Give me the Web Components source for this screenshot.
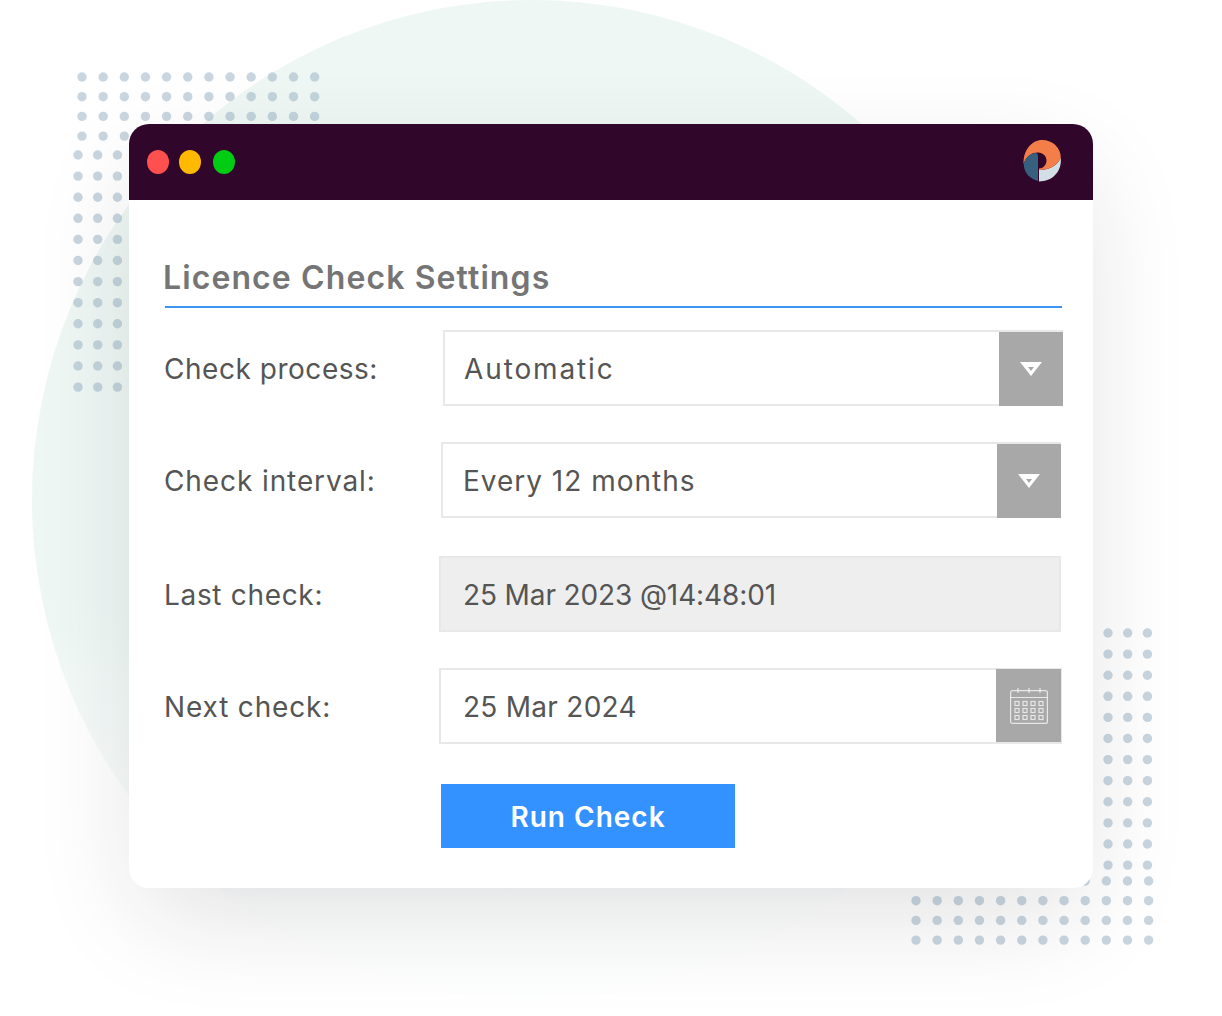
<!DOCTYPE html>
<html lang="en">
<head>
<meta charset="utf-8">
<title>Licence Check Settings</title>
<style>
  html, body { margin: 0; background: #fff; }
  body { width: 1222px; height: 1016px; overflow: hidden; font-family: Inter, "Liberation Sans", sans-serif; }
</style>
</head>
<body>
<licence-scene>
  <licence-window title-text="Licence Check Settings">
    <settings-row label="Check process:" track=".53" field-x="443" field-end="1063" gap="0"><select-field value="Automatic" track="1.88" pad="19"></select-field></settings-row>
    <settings-row label="Check interval:" track=".9" field-x="441" field-end="1061" gap="36"><select-field value="Every 12 months" track=".99" pad="20"></select-field></settings-row>
    <settings-row label="Last check:" track=".68" field-x="439" field-end="1061" gap="38"><read-field value="25 Mar 2023 @14:48:01" track="-.12"></read-field></settings-row>
    <settings-row label="Next check:" track=".84" field-x="439" field-end="1062" gap="36"><date-field value="25 Mar 2024" track=".27"></date-field></settings-row>
    <run-button>Run Check</run-button>
  </licence-window>
</licence-scene>

<script>
class DotGrid extends HTMLElement {
	connectedCallback() {
		const cols = +this.getAttribute("cols");
		const rows = +this.getAttribute("rows");
		const dx = +this.getAttribute("dx");
		const dy = +this.getAttribute("dy");
		const w = (cols - 1) * dx + 10;
		const h = (rows - 1) * dy + 10;
		let dots = "";
		for (let r = 0; r < rows; r++) {
			for (let c = 0; c < cols; c++) {
				dots += `<circle cx="${5 + c * dx}" cy="${5 + r * dy}" r="4.7"/>`;
			}
		}
		this.attachShadow({ mode: "open" }).innerHTML = `
			<style>
				:host { position: absolute; left: ${this.getAttribute("x")}px; top: ${this.getAttribute("y")}px; display: block; }
				svg { display: block; }
			</style>
			<svg width="${w}" height="${h}" viewBox="0 0 ${w} ${h}" fill="#9fb5c7" fill-opacity=".56">${dots}</svg>`;
	}
}

class LicenceScene extends HTMLElement {
	constructor() {
		super();
		this.attachShadow({ mode: "open" }).innerHTML = `
			<style>
				:host { display: block; position: relative; width: 1222px; height: 1016px; overflow: hidden; padding: 124px 129px 0; box-sizing: border-box; }
				.circle { position: absolute; left: 32px; top: 0; width: 1000px; height: 1000px; border-radius: 50%;
					background: linear-gradient(#eef7f4 60%, rgba(238,247,244,.05) 92%); }
			</style>
			<div class="circle"></div>
			<dot-grid x="77" y="72" cols="12" rows="4" dx="21.15" dy="19.7"></dot-grid>
			<dot-grid x="73" y="150" cols="3" rows="12" dx="19.7" dy="21.1"></dot-grid>
			<dot-grid x="1103" y="628" cols="3" rows="12" dx="19.7" dy="21.1"></dot-grid>
			<dot-grid x="911" y="876" cols="12" rows="4" dx="21.15" dy="19.7"></dot-grid>
			<slot></slot>`;
	}
}

class LicenceWindow extends HTMLElement {
	constructor() {
		super();
		this.attachShadow({ mode: "open" }).innerHTML = `
			<style>
				:host { display: block; position: relative; width: 964px; height: 764px; border-radius: 20px; background: #fff; box-shadow: 0 36px 110px -14px rgba(30,30,35,.14); }
				.bar { height: 76px; border-radius: 20px 20px 0 0; background: #30062a; display: flex; align-items: center; padding: 0 32px 0 18px; }
				.light { width: 22px; height: 24px; border-radius: 50%; margin-right: 10px; }
				.light + .light + .light { margin-left: 2px; }
				.logo { margin: -2px 0 0 auto; display: block; }
				.body { padding: 59px 0 0 35px; }
				h1 { margin: 0 31px 22px -1px; padding: 0 0 9px 0; font: 600 32px/38px Inter, "Liberation Sans", sans-serif; letter-spacing: 1.1px; color: #757575; border-bottom: 2px solid transparent; position: relative; }
				h1::after { content: ""; position: absolute; left: 2px; right: 0; bottom: -2px; height: 2px; background: #3b94f2; }
			</style>
			<div class="bar">
				<span class="light" style="background:#ff5050"></span>
				<span class="light" style="background:#ffb900"></span>
				<span class="light" style="background:#00cc14"></span>
				<svg class="logo" width="38" height="42" viewBox="0 0 38 42">
					<path fill="#d3dfe6" d="M16 30C26 30 34 26 37.8 18C39 31 30 41.5 16 41.5Z"/>
					<path fill="#f37e4a" d="M.6 24C0 10 9 0 19 0C30 0 38 8 37.8 18C34 26 26 30 16 30V28.5C20 28.5 23.5 25 23.5 20.5C23.5 16 20 13 15 12.5C8 12.5 3 17 .6 24Z"/>
					<path fill="#37607f" d="M.7 24C2 17 8 13 13 13C14.5 13 15 15 15 17V41C7 39 1 33 .7 24Z"/>
				</svg>
			</div>
			<div class="body">
				<h1>${this.getAttribute("title-text")}</h1>
				<slot></slot>
			</div>`;
	}
}

class SettingsRow extends HTMLElement {
	constructor() {
		super();
		const labelWidth = +this.getAttribute("field-x") - 164;
		const fieldWidth = +this.getAttribute("field-end") - +this.getAttribute("field-x");
		this.attachShadow({ mode: "open" }).innerHTML = `
			<style>
				:host { display: flex; align-items: center; height: 76px; margin-top: ${this.getAttribute("gap")}px; }
				label { flex: 0 0 ${labelWidth}px; padding-top: 2px; font: 400 28px/34px Inter, "Liberation Sans", sans-serif; letter-spacing: ${this.getAttribute("track")}px; color: #555; }
				.field { flex: 0 0 ${fieldWidth}px; }
			</style>
			<label>${this.getAttribute("label")}</label>
			<div class="field"><slot></slot></div>`;
	}
}

const fieldStyle = (el) => `
	:host { display: flex; height: 76px; box-sizing: border-box; border: 2px solid #e8e8e8; background: #fff;
		font: 400 28px/34px Inter, "Liberation Sans", sans-serif; letter-spacing: ${el.getAttribute("track")}px; color: #555; }
	.value { flex: 1; display: flex; align-items: center; padding: 2px 0 0 ${el.getAttribute("pad") || 22}px; }
	.btn { flex: 0 0 64px; margin: 0 -2px -2px 0; background: #a8a8a8; display: flex; align-items: center; justify-content: center; }
	svg { display: block; }
`;

class SelectField extends HTMLElement {
	constructor() {
		super();
		this.attachShadow({ mode: "open" }).innerHTML = `
			<style>${fieldStyle(this)}</style>
			<span class="value">${this.getAttribute("value")}</span>
			<span class="btn">
				<svg width="22" height="14" viewBox="0 0 22 14"><path fill="#fff" fill-rule="evenodd" d="M0 0H22L11 14ZM8 5H14L11 9Z"/></svg>
			</span>`;
	}
}

class ReadField extends HTMLElement {
	constructor() {
		super();
		this.attachShadow({ mode: "open" }).innerHTML = `
			<style>${fieldStyle(this)}
				:host { background: #eee; }
			</style>
			<span class="value">${this.getAttribute("value")}</span>`;
	}
}

class DateField extends HTMLElement {
	constructor() {
		super();
		let cells = "";
		for (let r = 0; r < 3; r++) {
			for (let c = 0; c < 4; c++) {
				cells += `<rect x="${5 + c * 8}" y="${13.5 + r * 7}" width="4" height="4"/>`;
			}
		}
		this.attachShadow({ mode: "open" }).innerHTML = `
			<style>${fieldStyle(this)}
				.btn { flex-basis: 65px; margin: -1px -1px 0 0; }
			</style>
			<span class="value">${this.getAttribute("value")}</span>
			<span class="btn">
				<svg width="38" height="36" viewBox="0 0 38 36" fill="none" stroke="#fff" stroke-opacity=".72" stroke-width="1.2">
					<rect x=".6" y="2.6" width="36.8" height="32.8" rx="2"/>
					<path d="M.6 9.5H37.4M8 0V5M19 0V5M30 0V5"/>
					${cells}
				</svg>
			</span>`;
	}
}

class RunButton extends HTMLElement {
	constructor() {
		super();
		this.attachShadow({ mode: "open" }).innerHTML = `
			<style>
				:host { display: flex; align-items: center; justify-content: center; box-sizing: border-box; padding-top: 2px; width: 294px; height: 64px; margin: 40px 0 0 277px;
					background: #3392ff; color: #fff; font: 600 28px/34px Inter, "Liberation Sans", sans-serif; letter-spacing: 1px; }
			</style>
			<slot></slot>`;
	}
}

customElements.define("dot-grid", DotGrid);
customElements.define("licence-scene", LicenceScene);
customElements.define("licence-window", LicenceWindow);
customElements.define("settings-row", SettingsRow);
customElements.define("select-field", SelectField);
customElements.define("read-field", ReadField);
customElements.define("date-field", DateField);
customElements.define("run-button", RunButton);
</script>
</body>
</html>
